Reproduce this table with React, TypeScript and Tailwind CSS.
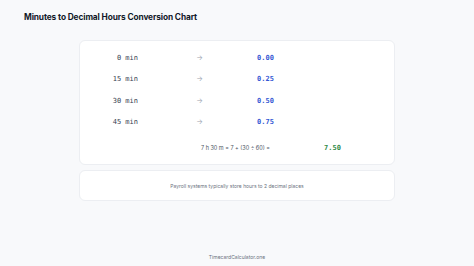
import React from "react";

const rows = [
  { m: "0 min", v: "0.00" },
  { m: "15 min", v: "0.25" },
  { m: "30 min", v: "0.50" },
  { m: "45 min", v: "0.75" },
];

export default function App() {
  return (
    <div className="w-[474px] h-[266px] bg-[#f8f9fb] flex flex-col overflow-hidden" style={{ fontFamily: "Inter, 'Liberation Sans', sans-serif" }}>
      <div className="pl-[24px] pt-[12px] h-[40px]">
        <div className="text-[8.3px] leading-[10px] font-bold text-[#111827] tracking-[-0.1px]">
          Minutes to Decimal Hours Conversion Chart
        </div>
      </div>
      <div className="ml-[79px] w-[316px] h-[125px] bg-white border border-[#eceef2] rounded-[6px] flex flex-col pt-[6px]">
        {rows.map((r) => (
          <div key={r.m} className="grid grid-cols-[58px_119px_auto] h-[21.5px] items-center font-['DejaVu_Sans_Mono',monospace] text-[7px] leading-[8px]">
            <div className="text-right text-[#374151]">{r.m}</div>
            <div className="text-center pl-[4px] text-[#9ca3af] font-['Inter',sans-serif]">→</div>
            <div className="text-[#3558d4] font-bold">{r.v}</div>
          </div>
        ))}
        <div className="flex items-center h-[18px] mt-[6px]">
          <div className="ml-[121px] w-[123px] text-[5.5px] leading-[7px] text-[#4b5563]">
            7 h 30 m = 7 + (30 ÷ 60) =
          </div>
          <div className="font-['DejaVu_Sans_Mono',monospace] text-[7px] leading-[8px] font-bold text-[#2f8a47]">7.50</div>
        </div>
      </div>
      <div className="ml-[79px] mt-[5px] w-[316px] h-[31px] bg-white border border-[#eceef2] rounded-[6px] flex items-center justify-center">
        <div className="text-[5px] leading-[6px] text-[#6b7280]">Payroll systems typically store hours to 2 decimal places</div>
      </div>
      <div className="mt-[53px] text-center text-[5px] leading-[6px] text-[#6b7280]">TimecardCalculator.one</div>
    </div>
  );
}
